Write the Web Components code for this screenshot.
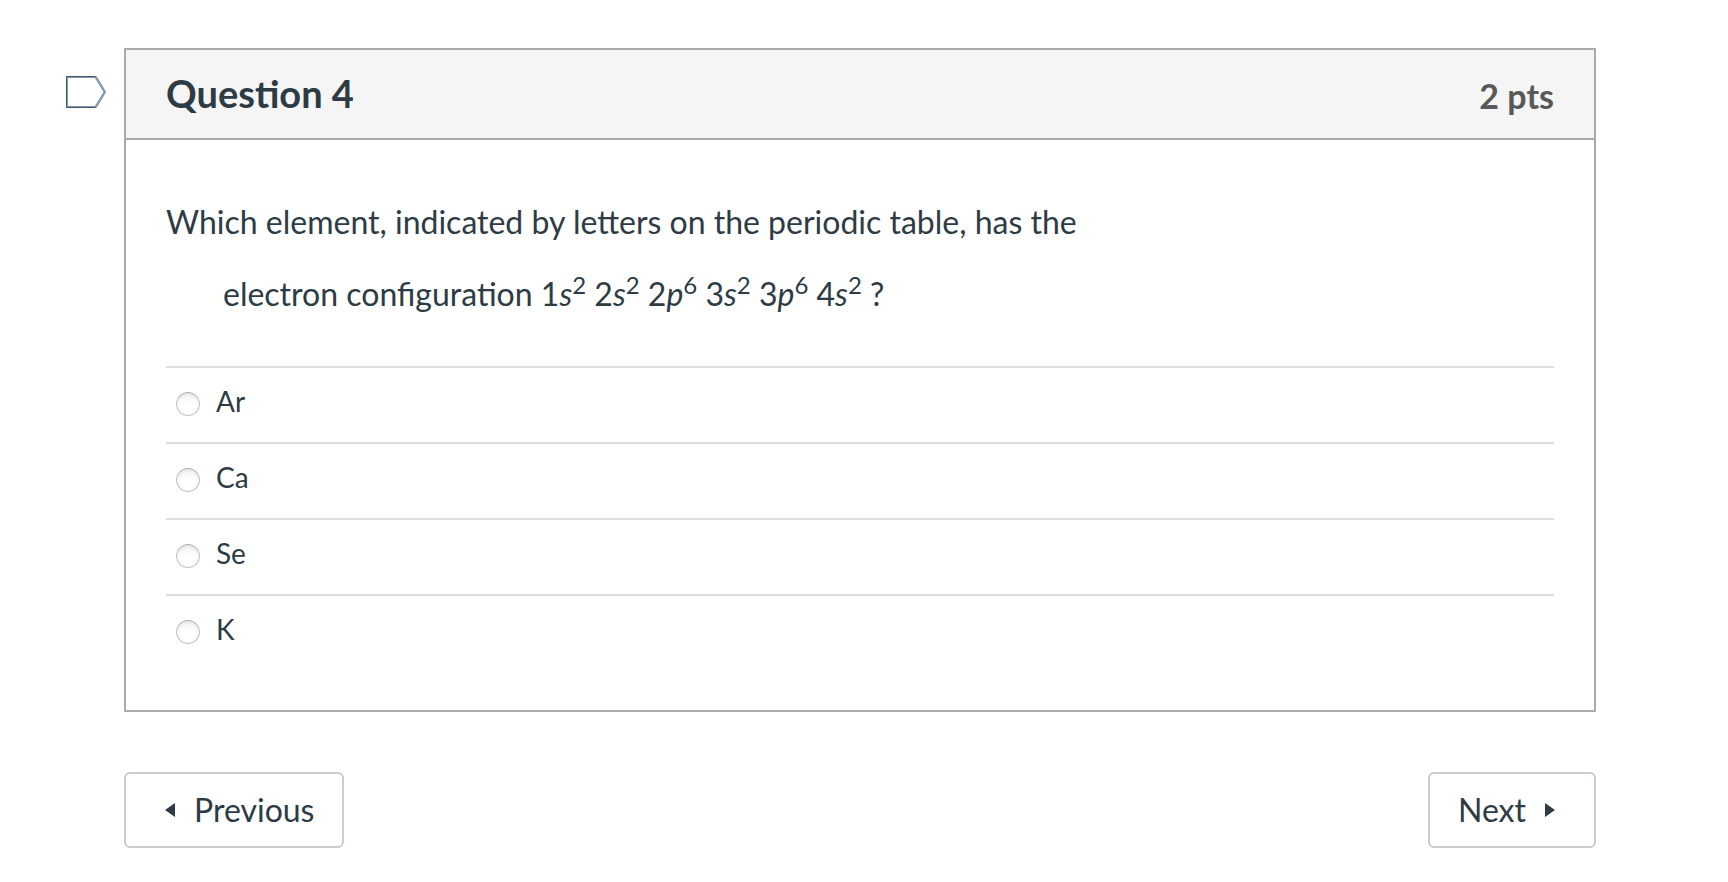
<!DOCTYPE html>
<html lang="en">
<head>
<meta charset="utf-8">
<title>Question 4</title>
<style>
body { margin: 0; background: #fff; color: #2d3b45; font-family: Lato, "Liberation Sans", sans-serif; font-size: 32px; line-height: 48px; }
</style>
</head>
<body>
<quiz-page>
  <question-flag slot="flag"></question-flag>
  <quiz-question>
    <span slot="name">Question 4</span>
    <span slot="points">2 pts</span>
    <question-text slot="text"></question-text>
    <answer-list slot="answers" options="Ar,Ca,Se,K"></answer-list>
  </quiz-question>
  <nav-button slot="nav" direction="previous">Previous</nav-button>
  <nav-button slot="nav" direction="next">Next</nav-button>
</quiz-page>
<script>
const define = (name, html, setup) => customElements.define(name, class extends HTMLElement {
  constructor() {
    super();
    this.attachShadow({ mode: 'open' }).innerHTML = html;
  }
  connectedCallback() {
    if (setup && !this.ready) { this.ready = true; setup(this, this.shadowRoot); }
  }
});

define('quiz-page', `
<style>
  :host { display: block; padding: 48px 132px 32px 66px; }
  .row { display: grid; grid-template-columns: 40px minmax(0, 1fr); column-gap: 18px; align-items: start; }
  .flag { padding-top: 28px; }
  nav { grid-column: 2; display: flex; justify-content: space-between; margin-top: 60px; }
</style>
<main class="row">
  <div class="flag"><slot name="flag"></slot></div>
  <slot></slot>
  <nav aria-label="Questions"><slot name="nav"></slot></nav>
</main>`);

define('question-flag', `
<style>
  :host { display: block; }
  button { display: block; width: 40px; height: 32px; padding: 0; border: 0; background: none; }
  svg { display: block; }
</style>
<button type="button" aria-label="Flag question">
  <svg width="40" height="32" viewBox="0 0 40 32" fill="none">
    <path d="M1 1H29.5L38.8 16L29.5 31H1Z" stroke="#8799a7" stroke-width="2"/>
    <path d="M29.5 .5H.5V31.5H29.5" stroke="#3f5a70"/>
    <path d="M30 1L38.8 16L30 31" stroke="#8799a7" stroke-width="2"/>
  </svg>
</button>`);

define('quiz-question', `
<style>
  :host { display: block; border: 2px solid #aaa; }
  header { display: flex; align-items: flex-start; justify-content: space-between; padding: 19px 40px 17px; background: #f5f5f5; border-bottom: 2px solid #aaa; }
  h2 { margin: 0; font-size: 38px; line-height: 48px; font-weight: 700; }
  .points { padding-top: 2px; font-size: 34px; line-height: 50px; font-weight: 700; color: #595959; }
  .body { padding: 58px 40px 40px; }
</style>
<header>
  <h2><slot name="name"></slot></h2>
  <div class="points"><slot name="points"></slot></div>
</header>
<div class="body"><slot name="text"></slot><slot name="answers"></slot></div>`);

define('question-text', `
<style>
  :host { display: block; margin-bottom: 48px; }
  p { margin: 0 0 24px; }
  p:last-child { margin: 0; padding-left: 57px; }
  sup { position: relative; top: -12px; font-size: 24px; line-height: 0; vertical-align: baseline; }
</style>
<p>Which element, indicated by letters on the periodic table, has the</p>
<p>electron configuration 1<em>s</em><sup>2</sup> 2<em>s</em><sup>2</sup> 2<em>p</em><sup>6</sup> 3<em>s</em><sup>2</sup> 3<em>p</em><sup>6</sup> 4<em>s</em><sup>2</sup> ?</p>`);

define('answer-list', `
<style>
  :host { display: block; font-size: 28px; line-height: 40px; }
  .answer { display: flex; align-items: center; gap: 16px; padding: 13px 10px 21px; border-top: 2px solid #ddd; }
  input { appearance: none; flex: none; width: 24px; height: 24px; margin: 6px 0 0; border: 1px solid #c4c4c4; border-top-color: #b0b0b0; border-radius: 50%; background: linear-gradient(#f1f1f1, #fff 50%); box-shadow: inset 0 1px 3px #ddd; }
</style>
<div role="radiogroup" aria-label="Answers"></div>`, (host, root) => {
  root.querySelector('div').innerHTML = host.getAttribute('options').split(',').map((text, i) =>
    `<div class="answer"><input type="radio" name="answer" id="answer-${i}"><label for="answer-${i}">${text}</label></div>`).join('');
});

define('nav-button', `
<style>
  :host { display: block; }
  button { display: flex; align-items: center; gap: 19px; height: 76px; padding: 0 28px; border: 2px solid #c7cdd1; border-radius: 6px; background: #fff; color: inherit; font: inherit; line-height: 48px; }
  svg { display: block; fill: currentColor; }
  :host([direction="previous"]) button { padding-left: 39px; }
  :host([direction="next"]) button { flex-direction: row-reverse; padding-right: 39px; }
  :host([direction="next"]) svg { transform: scaleX(-1); }
</style>
<button type="button">
  <svg width="10" height="14" viewBox="0 0 10 14" aria-hidden="true"><path d="M0 7L10 0V14Z"/></svg>
  <span><slot></slot></span>
</button>`);
</script>
</body>
</html>
